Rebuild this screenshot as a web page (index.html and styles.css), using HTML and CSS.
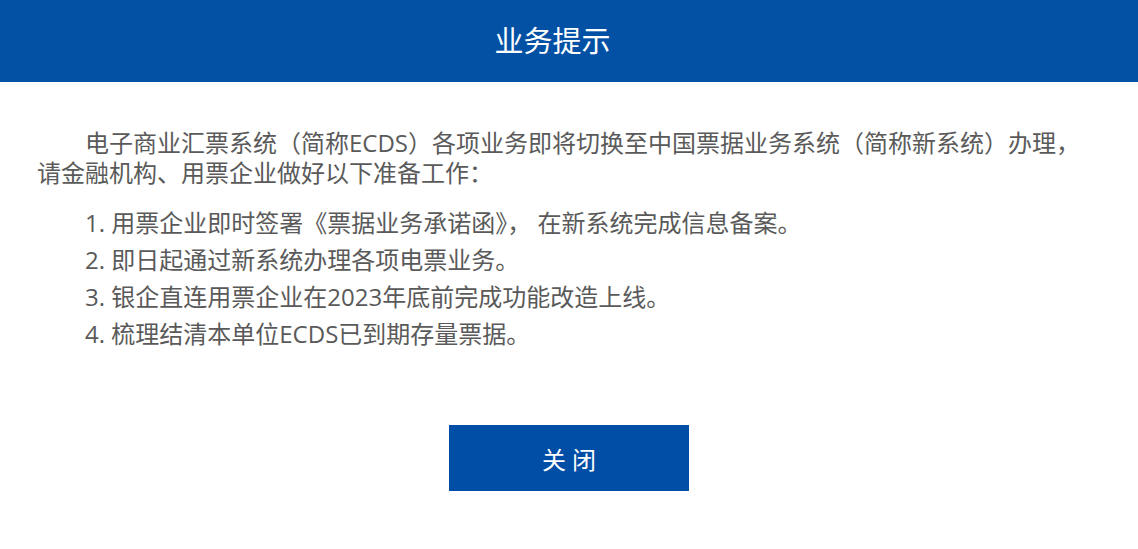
FILE: index.html
```html
<!DOCTYPE html>
<html lang="zh-CN">
<head>
    <meta charset="UTF-8">
    <title>业务提示</title>
    <link rel="stylesheet" href="styles.css">
</head>
<body>
    <div class="noticeDialog">
        <div class="noticeHeader">业务提示</div>
        <div class="noticeBody">
            <p class="noticeIntro">电子商业汇票系统（简称ECDS）各项业务即将切换至中国票据业务系统（简称新系统）办理，请金融机构、用票企业做好以下准备工作：</p>
            <ul class="noticeList">
                <li>1. 用票企业即时签署《票据业务承诺函》， 在新系统完成信息备案。</li>
                <li>2. 即日起通过新系统办理各项电票业务。</li>
                <li>3. 银企直连用票企业在2023年底前完成功能改造上线。</li>
                <li>4. 梳理结清本单位ECDS已到期存量票据。</li>
            </ul>
        </div>
        <div class="noticeFooter">
            <button class="closeButton">关 闭</button>
        </div>
    </div>
</body>
</html>
```

FILE: styles.css
```css
body {
    margin: 0;
    background-color: #ffffff;
    font-family: "Open Sans", "Noto Sans CJK SC", sans-serif;
}
.noticeDialog {
    display: flex;
    flex-direction: column;
}
.noticeHeader {
    background-color: #0351a5;
    color: #ffffff;
    font-size: 29px;
    height: 82px;
    line-height: 82px;
    text-align: center;
    padding-right: 33px;
}
.noticeBody {
    color: #5a5a5a;
    font-size: 24px;
    padding: 46px 36px 0 37px;
}
.noticeIntro {
    margin: 0;
    line-height: 30px;
    text-indent: 2em;
}
.noticeList {
    list-style: none;
    margin: 16px 0 0 0;
    padding: 0 0 0 48px;
    line-height: 37px;
}
.noticeFooter {
    display: flex;
    justify-content: center;
    padding-top: 73px;
}
.closeButton {
    background-color: #004ea6;
    border: none;
    color: #ffffff;
    font-family: "Open Sans", "Noto Sans CJK SC", sans-serif;
    font-size: 24px;
    height: 66px;
    width: 240px;
    cursor: pointer;
}
```
